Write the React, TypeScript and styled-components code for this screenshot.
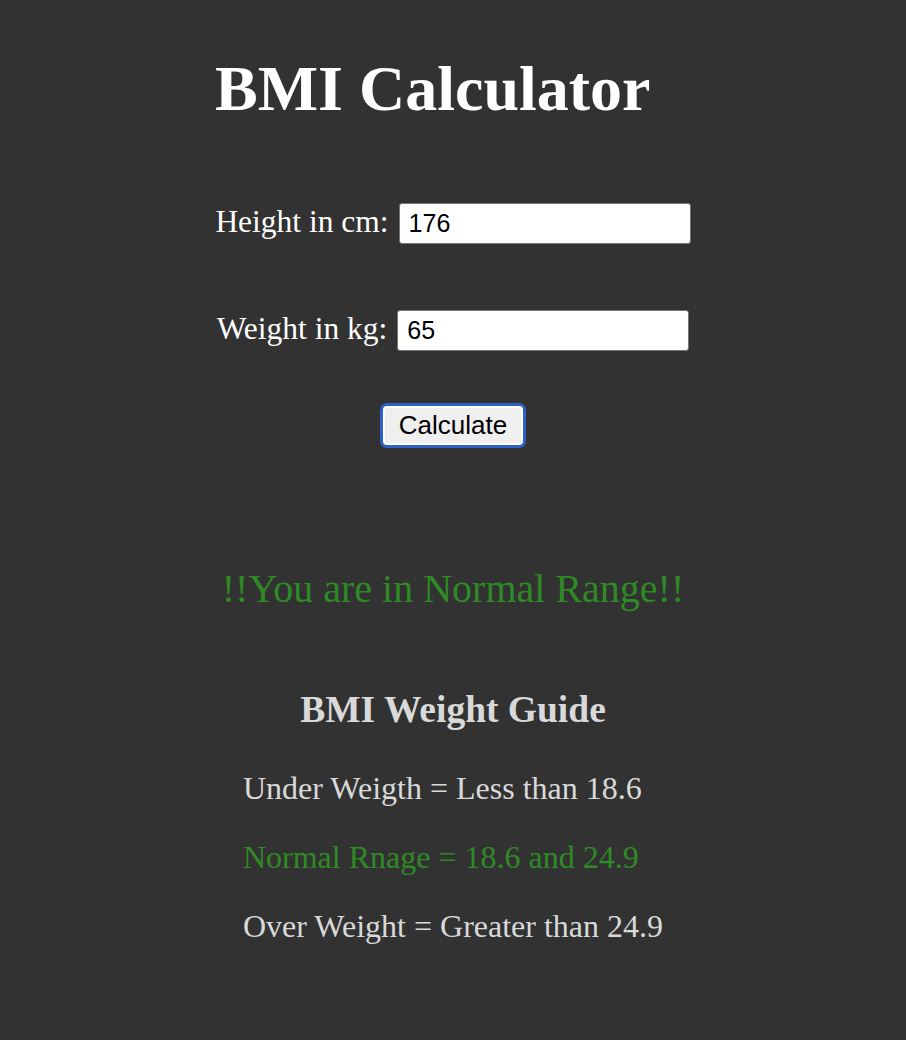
import React, { useState } from 'react';
import styled, { createGlobalStyle } from 'styled-components';

const GlobalStyle = createGlobalStyle`
  html, body {
    margin: 0;
    padding: 0;
    background-color: #323232;
  }
  body {
    font-family: "Liberation Serif", "Times New Roman", serif;
    min-height: 1040px;
  }
`;

const Page = styled.div`
  width: 476px;
  margin: 0 auto;
  padding-top: 57px;
  padding-bottom: 60px;
`;

const Title = styled.h1`
  margin: 0;
  font-size: 64px;
  line-height: 1;
  font-weight: bold;
  color: #ffffff;
`;

const Form = styled.form`
  display: flex;
  flex-direction: column;
  align-items: center;
  margin-top: 82px;
`;

const Row = styled.div<{ $gapAfter: number }>`
  display: flex;
  align-items: center;
  justify-content: center;
  gap: 10px;
  margin-bottom: ${props => props.$gapAfter}px;
`;

const Label = styled.label`
  font-size: 31.5px;
  line-height: 1;
  color: #ffffff;
  margin-bottom: 4px;
`;

const Input = styled.input`
  box-sizing: border-box;
  width: 292px;
  height: 41px;
  padding: 0 9px;
  border: 1px solid #767676;
  border-radius: 3px;
  background: #ffffff;
  color: #000000;
  font-family: "Liberation Sans", Arial, sans-serif;
  font-size: 25px;
  outline: none;
`;

const Button = styled.button`
  box-sizing: border-box;
  width: 140px;
  height: 39px;
  margin: 3px;
  padding: 0;
  border: 2px solid #ffffff;
  border-radius: 4px;
  box-shadow: 0 0 0 3px #2c61c7;
  background: #efefef;
  color: #000000;
  font-family: "Liberation Sans", Arial, sans-serif;
  font-size: 26px;
  cursor: pointer;
`;

const Result = styled.p<{ $color: string }>`
  margin: 121px 0 0;
  text-align: center;
  font-size: 40px;
  line-height: 1;
  color: ${props => props.$color};
`;

const GuideTitle = styled.h2`
  margin: 82px 0 0;
  text-align: center;
  font-size: 37.5px;
  line-height: 1;
  font-weight: bold;
  color: #d9d9d9;
`;

const GuideWrap = styled.div`
  display: flex;
  justify-content: center;
  margin-top: 43px;
`;

const GuideList = styled.ul`
  list-style: none;
  margin: 0;
  padding: 0;
  display: flex;
  flex-direction: column;
  gap: 37px;
`;

const GuideItem = styled.li<{ $active?: boolean }>`
  font-size: 32px;
  line-height: 1;
  color: ${props => (props.$active ? '#2f8a25' : '#d9d9d9')};
`;

const App: React.FC = () => {
  const [height, setHeight] = useState('176');
  const [weight, setWeight] = useState('65');
  const [bmi, setBmi] = useState(() => 65 / (1.76 * 1.76));

  const handleSubmit = (e: React.FormEvent) => {
    e.preventDefault();
    const h = parseFloat(height) / 100;
    const w = parseFloat(weight);
    if (h > 0 && w > 0) setBmi(w / (h * h));
  };

  let message = '!!You are in Normal Range!!';
  let color = '#2f8a25';
  if (bmi < 18.6) {
    message = '!!You are Under Weight!!';
    color = '#d9a321';
  } else if (bmi > 24.9) {
    message = '!!You are Over Weight!!';
    color = '#c93a2b';
  }

  return (
    <>
      <GlobalStyle />
      <Page>
        <Title>BMI Calculator</Title>
        <Form onSubmit={handleSubmit}>
          <Row $gapAfter={66}>
            <Label htmlFor="height">Height in cm:</Label>
            <Input id="height" value={height} onChange={e => setHeight(e.target.value)} />
          </Row>
          <Row $gapAfter={52}>
            <Label htmlFor="weight">Weight in kg:</Label>
            <Input id="weight" value={weight} onChange={e => setWeight(e.target.value)} />
          </Row>
          <Button type="submit">Calculate</Button>
        </Form>
        <Result $color={color}>{message}</Result>
        <GuideTitle>BMI Weight Guide</GuideTitle>
        <GuideWrap>
          <GuideList>
            <GuideItem $active={bmi < 18.6}>Under Weigth = Less than 18.6</GuideItem>
            <GuideItem $active={bmi >= 18.6 && bmi <= 24.9}>Normal Rnage = 18.6 and 24.9</GuideItem>
            <GuideItem $active={bmi > 24.9}>Over Weight = Greater than 24.9</GuideItem>
          </GuideList>
        </GuideWrap>
      </Page>
    </>
  );
};

export default App;
